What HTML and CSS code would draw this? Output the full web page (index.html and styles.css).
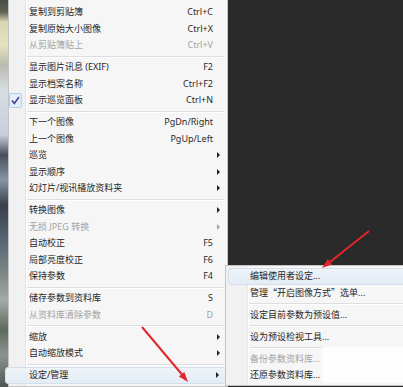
FILE: index.html
```html
<!DOCTYPE html>
<html lang="zh-CN">
<head>
    <meta charset="UTF-8">
    <title>菜单</title>
    <link rel="stylesheet" href="styles.css">
</head>
<body>
<div class="screen">
    <div class="photo"></div>

    <div class="menu main-menu">
        <div class="item"><span class="label">复制到剪贴簿</span><span class="key">Ctrl+C</span></div>
        <div class="item"><span class="label">复制原始大小图像</span><span class="key">Ctrl+X</span></div>
        <div class="item off"><span class="label">从剪贴簿贴上</span><span class="key">Ctrl+V</span></div>
        <div class="sep"></div>
        <div class="item"><span class="label">显示图片讯息 (EXIF)</span><span class="key">F2</span></div>
        <div class="item"><span class="label">显示档案名称</span><span class="key">Ctrl+F2</span></div>
        <div class="item">
            <span class="check"><svg width="11" height="11" viewBox="0 0 11 11"><path d="M2 5.5 L4.3 8.5 L9 2" fill="none" stroke="#3d3a8c" stroke-width="1.4"/></svg></span>
            <span class="label">显示巡览面板</span><span class="key">Ctrl+N</span>
        </div>
        <div class="sep"></div>
        <div class="item"><span class="label">下一个图像</span><span class="key">PgDn/Right</span></div>
        <div class="item"><span class="label">上一个图像</span><span class="key">PgUp/Left</span></div>
        <div class="item"><span class="label">巡览</span><span class="arrow"></span></div>
        <div class="item"><span class="label">显示顺序</span><span class="arrow"></span></div>
        <div class="item"><span class="label">幻灯片/视讯播放资料夹</span><span class="arrow"></span></div>
        <div class="sep"></div>
        <div class="item"><span class="label">转换图像</span><span class="arrow"></span></div>
        <div class="item off"><span class="label">无损 JPEG 转换</span><span class="arrow"></span></div>
        <div class="item"><span class="label">自动校正</span><span class="key">F5</span></div>
        <div class="item"><span class="label">局部亮度校正</span><span class="key">F6</span></div>
        <div class="item"><span class="label">保持参数</span><span class="key">F4</span></div>
        <div class="sep"></div>
        <div class="item"><span class="label">储存参数到资料库</span><span class="key">S</span></div>
        <div class="item off"><span class="label">从资料库清除参数</span><span class="key">D</span></div>
        <div class="sep"></div>
        <div class="item"><span class="label">缩放</span><span class="arrow"></span></div>
        <div class="item"><span class="label">自动缩放模式</span><span class="arrow"></span></div>
        <div class="sep"></div>
        <div class="item hot"><span class="label">设定/管理</span><span class="arrow"></span></div>
    </div>

    <div class="viewer"></div>

    <div class="menu sub-menu">
        <div class="item hot"><span class="label">编辑使用者设定...</span></div>
        <div class="item"><span class="label">管理<span class="q">“</span>开启图像方式<span class="q">”</span>选单...</span></div>
        <div class="sep"></div>
        <div class="item"><span class="label">设定目前参数为预设值...</span></div>
        <div class="sep"></div>
        <div class="item"><span class="label">设为预设检视工具...</span></div>
        <div class="sep"></div>
        <div class="item off"><span class="label">备份参数资料库...</span></div>
        <div class="item"><span class="label">还原参数资料库...</span></div>
    </div>

    <div class="blot"></div>

    <svg class="marks" width="403" height="387" viewBox="0 0 403 387">
        <line x1="369" y1="231" x2="330" y2="262" stroke="#e3262b" stroke-width="2"/>
        <polygon points="322,268 327.7,259.1 332.1,264.6" fill="#e3262b"/>
        <line x1="142" y1="327" x2="182" y2="374.5" stroke="#e3262b" stroke-width="2"/>
        <polygon points="188,382 178.9,376.6 184.3,372.1" fill="#e3262b"/>
    </svg>
</div>
</body>
</html>
```

FILE: styles.css
```css
body { margin: 0; background: #2a2a2a; }

.screen { position: relative; display: flex; width: 403px; height: 387px; overflow: hidden; background: #2a2a2a; }

.photo { flex: none; width: 8px; background: linear-gradient(to bottom, #4b5046 0, #5d6352 12px, #d9d6b2 22px, #e6e2bd 45px, #b9bcae 65px, #d7dde3 90px, #c7cfdc 135px, #48505a 155px, #8795a6 180px, #39414a 205px, #566474 240px, #7f8a86 275px, #a4aaa6 300px, #5d6a5e 330px, #8b9590 355px, #4d5650 387px); }

.menu { box-sizing: border-box; font: 9px "Noto Sans", "Noto Sans CJK SC", sans-serif; color: #1f1f1f; }
.q { font-family: "Noto Sans CJK SC", sans-serif; }

.main-menu { flex: none; width: 220px; height: 387px; padding-top: 4px; border: 1px solid #c4c4c4; border-top: none; background: linear-gradient(to right, #f1f1f1 0, #f1f1f1 16px, #e2e3e3 16px, #e2e3e3 17px, #fff 17px, #fff 18px, #f6f6f6 18px); }
.viewer { flex: 1; }

.item { display: grid; grid-template-columns: 20px 1fr auto 14px; align-items: center; height: 16.5px; line-height: 16.5px; white-space: nowrap; }
.item .check { grid-column: 1; }
.item .label { grid-column: 2; }
.item .key { grid-column: 3; color: #2a2a2a; }
.item .arrow { grid-column: 4; width: 0; height: 0; margin-left: 4px; border-left: 3px solid #222; border-top: 3px solid transparent; border-bottom: 3px solid transparent; }
.item.off { color: #a3a3a3; }
.item.off .key { color: #a3a3a3; }
.item.off .arrow { border-left-color: #a3a3a3; }

.item.hot { box-sizing: border-box; margin: 0 1px 0 -4px; grid-template-columns: 23px 1fr auto 13px; line-height: 14.5px; border: 1px solid #d4dfec; border-radius: 3px; background: linear-gradient(to bottom, #eef3f9, #e4ecf5); }

.check { display: flex; align-items: center; justify-content: center; box-sizing: border-box; width: 13px; height: 15px; margin-left: 0; border: 1px solid #b4cde9; border-radius: 2px; background: #e3eefa; }

.sep { height: 1px; margin: 2px 3px 1.5px 18px; border-top: 1px solid #dedede; background: #fff; }

.sub-menu { position: absolute; left: 225px; top: 265px; width: 200px; height: 121px; padding-top: 2px; border: 1px solid #c4c4c4; border-right: none; background: linear-gradient(to right, #f1f1f1 0, #f1f1f1 21px, #e6e7e7 21px, #e6e7e7 22px, #fff 22px, #fff 23px, #f6f6f6 23px); }
.sub-menu .item { grid-template-columns: 24px 1fr; }
.sub-menu .item.hot { margin: 0 0 0 2px; grid-template-columns: 21px 1fr; }
.sub-menu .sep { margin-left: 24px; margin-right: 0; }

.blot { position: absolute; left: 322px; top: 347px; width: 81px; height: 36px; background: #fdfdfd; }

.marks { position: absolute; left: 0; top: 0; pointer-events: none; }
```
